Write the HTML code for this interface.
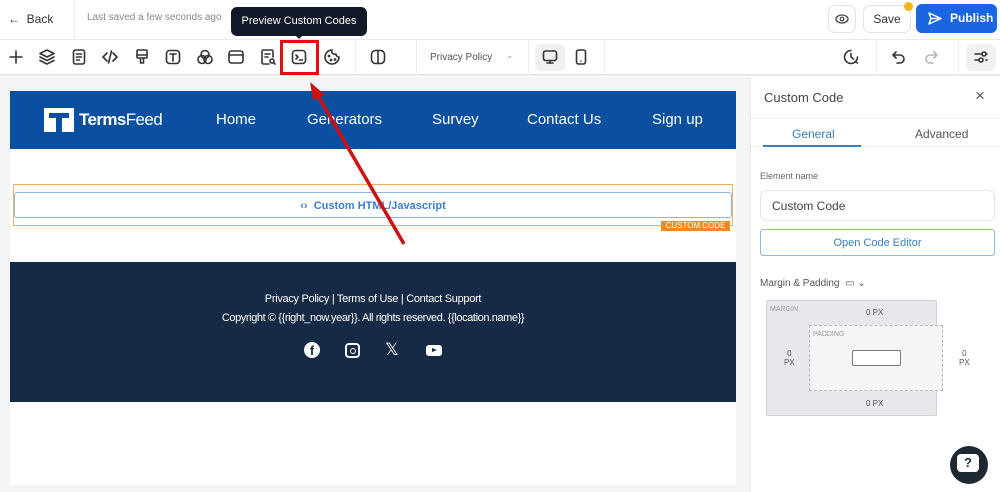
<!DOCTYPE html>
<html><head><meta charset="utf-8"><style>
*{box-sizing:border-box;margin:0;padding:0}
body{width:1000px;height:492px;overflow:hidden;font-family:"Liberation Sans",sans-serif;background:#fff;position:relative;color:#333}
.abs{position:absolute}
.ic{position:absolute;width:18px;height:18px}
.ic svg{width:18px;height:18px;fill:none;stroke:#333;stroke-width:1.6;stroke-linecap:round;stroke-linejoin:round}
</style></head><body>
<!-- top bar -->
<div class="abs" style="left:0;top:0;width:1000px;height:40px;border-bottom:1px solid #e8e8e8"></div>
<div class="abs" style="left:74px;top:0;width:1px;height:40px;background:#eee"></div>
<div class="abs" style="left:8px;top:12px;font-size:12px;color:#333">←&nbsp; Back</div>
<div class="abs" style="left:87px;top:12px;font-size:10px;color:#888">Last saved a few seconds ago</div>
<div class="abs" style="left:231px;top:7px;width:136px;height:29px;background:#111827;border-radius:6px;color:#fff;font-size:11px;line-height:29px;text-align:center">Preview Custom Codes</div>
<div class="abs" style="left:295px;top:35px;width:0;height:0;border-left:4px solid transparent;border-right:4px solid transparent;border-top:4px solid #111827"></div>
<div class="abs" style="left:828px;top:5px;width:28px;height:28px;border:1px solid #e3e3e3;border-radius:7px"><svg width="26" height="26" viewBox="0 0 26 26"><ellipse cx="13" cy="13" rx="6" ry="4" fill="none" stroke="#444" stroke-width="1.3"/><circle cx="13" cy="13" r="1.8" fill="none" stroke="#444" stroke-width="1.2"/></svg></div>
<div class="abs" style="left:863px;top:5px;width:48px;height:28px;border:1px solid #e3e3e3;border-radius:7px;font-size:12px;text-align:center;line-height:27px">Save</div>
<div class="abs" style="left:904px;top:2px;width:9px;height:9px;border-radius:50%;background:#f6b31b"></div>
<div class="abs" style="left:916px;top:4px;width:81px;height:29px;background:#1a66e0;border-radius:6px;color:#fff;font-size:12px;font-weight:bold;line-height:29px;padding-left:34px">Publish</div>
<svg class="abs" style="left:927px;top:11px" width="16" height="15" viewBox="0 0 16 15"><path d="M2 2l12 5.5L2 13l2-5.5z M4 7.5h10" fill="none" stroke="#fff" stroke-width="1.5" stroke-linejoin="round"/></svg>
<!-- toolbar -->
<div class="abs" style="left:0;top:40px;width:1000px;height:36px;border-bottom:2px solid #e5e7eb"></div>
<div class="ic" style="left:7px;top:48px"><svg viewBox="0 0 18 18"><path d="M9 3v12M3 9h12"/></svg></div>
<div class="ic" style="left:38px;top:48px"><svg viewBox="0 0 18 18"><path d="M9 2l7 3.5-7 3.5-7-3.5z M2 9l7 3.5 7-3.5 M2 12.5l7 3.5 7-3.5"/></svg></div>
<div class="ic" style="left:70px;top:48px"><svg viewBox="0 0 18 18"><rect x="3.5" y="2" width="11" height="14" rx="2"/><path d="M6.5 6h5M6.5 9h5M6.5 12h3"/></svg></div>
<div class="ic" style="left:101px;top:48px"><svg viewBox="0 0 18 18"><path d="M6 5l-4 4 4 4M12 5l4 4-4 4M10.5 3l-3 12"/></svg></div>
<div class="ic" style="left:133px;top:48px"><svg viewBox="0 0 18 18"><rect x="4" y="2" width="10" height="8" rx="1"/><path d="M4 7h10M7.5 10v5h3v-5"/></svg></div>
<div class="ic" style="left:164px;top:48px"><svg viewBox="0 0 18 18"><rect x="2.5" y="2.5" width="13" height="13" rx="3"/><path d="M6 6h6M9 6v7"/></svg></div>
<div class="ic" style="left:196px;top:48px"><svg viewBox="0 0 18 18"><circle cx="9" cy="6.5" r="4"/><circle cx="6" cy="11.5" r="4"/><circle cx="12" cy="11.5" r="4"/></svg></div>
<div class="ic" style="left:227px;top:48px"><svg viewBox="0 0 18 18"><rect x="2" y="3" width="14" height="12" rx="2.5"/><path d="M2 7h14"/></svg></div>
<div class="ic" style="left:259px;top:48px"><svg viewBox="0 0 18 18"><path d="M10 16H4.5A1.5 1.5 0 0 1 3 14.5v-11A1.5 1.5 0 0 1 4.5 2h8A1.5 1.5 0 0 1 14 3.5V9M6 6h5M6 9h3"/><circle cx="13" cy="13" r="2"/><path d="M14.5 14.5l1.5 1.5"/></svg></div>
<div class="ic" style="left:290px;top:48px"><svg viewBox="0 0 18 18"><rect x="2.5" y="2.5" width="13" height="13" rx="3"/><path d="M6 7l2 2-2 2M9.5 12h3"/></svg></div>
<div class="abs" style="left:280px;top:40px;width:39px;height:35px;border:3px solid #e01010"></div>
<div class="ic" style="left:323px;top:48px"><svg viewBox="0 0 18 18"><path d="M9 2a7 7 0 1 0 7 7 3 3 0 0 1-3-3 3 3 0 0 1-4-4z"/><circle cx="6" cy="8" r=".6"/><circle cx="8" cy="12" r=".6"/><circle cx="12" cy="11.5" r=".6"/></svg></div>
<div class="abs" style="left:355px;top:40px;width:1px;height:36px;background:#eee"></div>
<div class="ic" style="left:369px;top:48px"><svg viewBox="0 0 18 18"><rect x="2.5" y="2.5" width="13" height="13" rx="4"/><path d="M9 2.5v13"/></svg></div>
<div class="abs" style="left:416px;top:40px;width:1px;height:36px;background:#eee"></div>
<div class="abs" style="left:430px;top:52px;font-size:10px;color:#555">Privacy Policy</div>
<div class="abs" style="left:506px;top:50px;font-size:9px;color:#999">⌄</div>
<div class="abs" style="left:528px;top:40px;width:1px;height:36px;background:#eee"></div>
<div class="abs" style="left:535px;top:44px;width:30px;height:27px;background:#f0f1f3;border-radius:6px"></div>
<div class="ic" style="left:541px;top:48px"><svg viewBox="0 0 18 18"><rect x="2.5" y="3" width="13" height="9.5" rx="2"/><path d="M9 12.5v2.5M6 15h6"/></svg></div>
<div class="ic" style="left:572px;top:48px"><svg viewBox="0 0 18 18"><rect x="4.5" y="2" width="9" height="14" rx="2"/><path d="M9 13h.01"/></svg></div>
<div class="abs" style="left:604px;top:40px;width:1px;height:36px;background:#eee"></div>
<div class="ic" style="left:842px;top:48px"><svg viewBox="0 0 18 18"><path d="M15.5 9A6.5 6.5 0 1 1 9 2.5M9 5.5V9l2.5 2M13 13.5l2.5 1.5"/></svg></div>
<div class="abs" style="left:876px;top:40px;width:1px;height:36px;background:#eee"></div>
<div class="ic" style="left:890px;top:48px"><svg viewBox="0 0 18 18"><path d="M6 4L3 7l3 3M3 7h7a4 4 0 0 1 0 8H7"/></svg></div>
<div class="ic" style="left:922px;top:48px"><svg viewBox="0 0 18 18" style="opacity:.35"><path d="M12 4l3 3-3 3M15 7H8a4 4 0 0 0 0 8h3"/></svg></div>
<div class="abs" style="left:958px;top:40px;width:1px;height:36px;background:#eee"></div>
<div class="abs" style="left:966px;top:44px;width:30px;height:27px;background:#f0f1f3;border-radius:6px"></div>
<div class="ic" style="left:972px;top:48px"><svg viewBox="0 0 18 18"><path d="M3 6h7M14 12h1M3 12h4M14 6h1"/><circle cx="12" cy="6" r="2"/><circle cx="9" cy="12" r="2"/></svg></div>
<!-- canvas -->
<div class="abs" style="left:0;top:77px;width:750px;height:415px;background:#f3f4f6"></div>
<div class="abs" style="left:10px;top:91px;width:726px;height:394px;background:#fff"></div>
<div class="abs" style="left:10px;top:91px;width:726px;height:58px;background:#0a4fa0"></div>
<div class="abs" style="left:44px;top:108px;width:30px;height:24px;background:#fff"></div>
<div class="abs" style="left:49px;top:113px;width:20px;height:5px;background:#0a4fa0"></div>
<div class="abs" style="left:56px;top:117px;width:6px;height:15px;background:#0a4fa0"></div>
<div class="abs" style="left:79px;top:110px;color:#fff;font-size:17px;letter-spacing:-.6px"><b>Terms</b>Feed</div>
<div class="abs" style="left:216px;top:111px;color:#fff;font-size:15px">Home</div>
<div class="abs" style="left:307px;top:111px;color:#fff;font-size:15px">Generators</div>
<div class="abs" style="left:432px;top:111px;color:#fff;font-size:15px">Survey</div>
<div class="abs" style="left:527px;top:111px;color:#fff;font-size:15px">Contact Us</div>
<div class="abs" style="left:652px;top:111px;color:#fff;font-size:15px">Sign up</div>
<div class="abs" style="left:13px;top:184px;width:720px;height:42px;border:1px solid #f0b060"></div>
<div class="abs" style="left:14px;top:192px;width:718px;height:26px;border:1px solid #8fb8e0;border-radius:3px;text-align:center;line-height:27px;font-size:11px;color:#3a7fd0;font-weight:bold">‹› &nbsp;Custom HTML/Javascript</div>
<div class="abs" style="left:661px;top:221px;width:69px;height:10px;background:#f78a1d;color:#fff;font-size:8px;line-height:10px;text-align:center">CUSTOM CODE</div>
<div class="abs" style="left:10px;top:262px;width:726px;height:140px;background:#172a45"></div>
<div class="abs" style="left:10px;top:293px;width:726px;text-align:center;color:#fff;font-size:11px;letter-spacing:-.3px">Privacy Policy | Terms of Use | Contact Support</div>
<div class="abs" style="left:10px;top:312px;width:726px;text-align:center;color:#fff;font-size:11px;letter-spacing:-.4px">Copyright © {{right_now.year}}. All rights reserved. {{location.name}}</div>
<div class="abs" style="left:304px;top:342px;width:16px;height:16px;border-radius:50%;background:#fff;color:#172a45;font-size:13px;font-weight:bold;text-align:center;line-height:18px">f</div>
<div class="abs" style="left:345px;top:343px;width:15px;height:15px;border:2px solid #fff;border-radius:4px"><div style="margin:2.5px;width:6px;height:6px;border:1.5px solid #fff;border-radius:50%"></div></div>
<div class="abs" style="left:385px;top:340px;color:#fff;font-size:17px">𝕏</div>
<div class="abs" style="left:426px;top:345px;width:16px;height:11px;background:#fff;border-radius:3px"><div style="margin:3px 0 0 6px;border-left:5px solid #172a45;border-top:2.5px solid transparent;border-bottom:2.5px solid transparent;width:0"></div></div>
<!-- arrow -->
<svg class="abs" style="left:0;top:0" width="1000" height="492"><line x1="404" y1="244" x2="318" y2="96" stroke="#d01010" stroke-width="3.5"/><path d="M310 82l15 13-12 5z" fill="#d01010"/></svg>
<!-- right panel -->
<div class="abs" style="left:750px;top:77px;width:250px;height:415px;background:#fff;border-left:1px solid #e5e7eb"></div>
<div class="abs" style="left:764px;top:90px;font-size:13px;color:#444">Custom Code</div>
<div class="abs" style="left:975px;top:86px;font-size:17px;color:#555">×</div>
<div class="abs" style="left:751px;top:118px;width:249px;height:1px;background:#eee"></div>
<div class="abs" style="left:751px;top:146px;width:249px;height:1px;background:#eee"></div>
<div class="abs" style="left:792px;top:127px;font-size:12px;color:#3a7fc0">General</div>
<div class="abs" style="left:763px;top:145px;width:98px;height:2px;background:#3a7fc0"></div>
<div class="abs" style="left:915px;top:127px;font-size:12px;color:#555">Advanced</div>
<div class="abs" style="left:760px;top:171px;font-size:9px;color:#666">Element name</div>
<div class="abs" style="left:760px;top:190px;width:235px;height:31px;border:1px solid #e5e7eb;border-radius:6px;font-size:12px;color:#444;padding-left:11px;line-height:30px">Custom Code</div>
<div class="abs" style="left:760px;top:229px;width:235px;height:27px;border:1px solid #8fb8e0;border-radius:3px;font-size:11px;color:#3a7fc0;text-align:center;line-height:26px">Open Code Editor</div>
<div class="abs" style="left:760px;top:278px;font-size:10px;color:#555">Margin &amp; Padding &nbsp;▭ ⌄</div>
<div class="abs" style="left:766px;top:300px;width:171px;height:116px;background:#e6e8ec;border:1px solid #cfd3d9;border-radius:2px"></div>
<div class="abs" style="left:770px;top:306px;font-size:7px;color:#999">MARGIN</div>
<div class="abs" style="left:866px;top:308px;font-size:8px;color:#555">0 PX</div>
<div class="abs" style="left:866px;top:399px;font-size:8px;color:#555">0 PX</div>
<div class="abs" style="left:784px;top:349px;font-size:8px;color:#555;text-align:center">0<br>PX</div>
<div class="abs" style="left:959px;top:349px;font-size:8px;color:#555;text-align:center">0<br>PX</div>
<div class="abs" style="left:809px;top:325px;width:134px;height:66px;background:#f4f5f7;border:1px dashed #bbb"></div>
<div class="abs" style="left:813px;top:331px;font-size:7px;color:#999">PADDING</div>
<div class="abs" style="left:852px;top:350px;width:49px;height:16px;background:#fff;border:1px solid #777;border-radius:2px"></div>
<div class="abs" style="left:950px;top:446px;width:38px;height:38px;border-radius:50%;background:#1f2933"></div>
<div class="abs" style="left:957px;top:454px;width:22px;height:18px;background:#fff;border-radius:4px;text-align:center;font-size:13px;font-weight:bold;color:#1f2933;line-height:18px">?</div>
</body></html>
